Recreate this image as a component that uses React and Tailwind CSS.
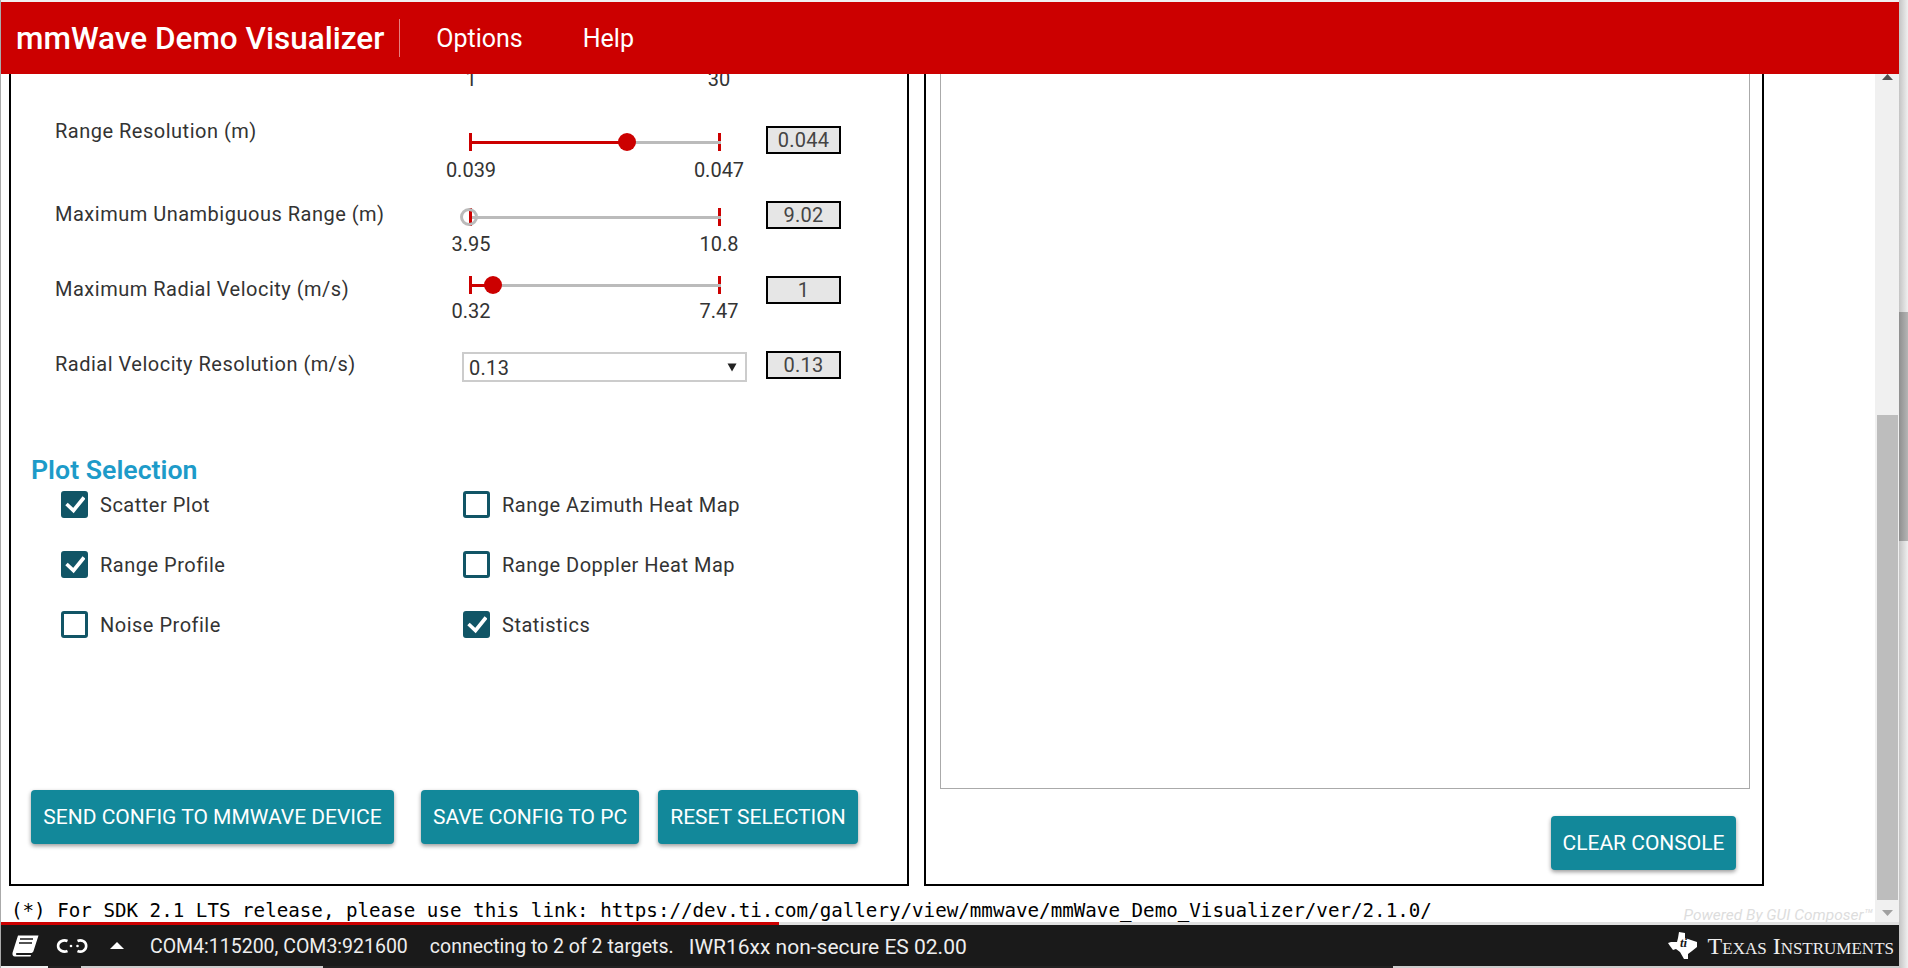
import React from 'react';

const Slider = ({ min, max, percent, fillTo = 0, hollow = false, labelsClass = 'mt-[6px]' }) => (
    <div className="w-[330px] px-[39px] shrink-0">
        <div className="relative w-[252px] h-[18px]">
            <div className="absolute right-0 top-0 w-[3px] h-[18px] bg-[#cc0000]" />
            <div className="absolute left-0 right-0 top-[8px] h-[3px] bg-[#bbbbbb]" />
            {fillTo > 0 && <div className="absolute left-0 top-[8px] h-[3px] bg-[#cc0000]" style={{ width: fillTo }} />}
            <div className="absolute left-0 top-0 w-[3px] h-[18px] bg-[#cc0000]" />
            {hollow ? (
                <div className="absolute left-[-9px] top-0 w-[18px] h-[18px] rounded-full border-[3px] border-[#bbbbbb]" />
            ) : (
                <div className="absolute top-0 w-[18px] h-[18px] rounded-full bg-[#cc0000]" style={{ left: percent }} />
            )}
        </div>
        <RangeLabels min={min} max={max} className={labelsClass} />
    </div>
);

const RangeLabels = ({ min, max, className }) => (
    <div className={`flex justify-between -mx-[39px] px-[1px] text-[20px] leading-[24px] text-[#333333] ${className}`}>
        <span className="w-[80px] text-center">{min}</span>
        <span className="w-[80px] text-center">{max}</span>
    </div>
);

const ValueBox = ({ value, className = '' }) => (
    <div className={`w-[75px] h-[28px] ml-[6px] shrink-0 border-[2.5px] border-black bg-[#e6e6e6] text-[20px] leading-[24px] tracking-[0.3px] text-[#444444] text-center ${className}`}>
        {value}
    </div>
);

const Label = ({ children, className = '' }) => (
    <div className={`w-[375px] shrink-0 text-[20px] leading-[24px] tracking-[0.5px] text-[#333333] ${className}`}>{children}</div>
);

const Check = ({ label, checked }) => (
    <div className="flex items-center h-[27px]">
        <div className={`w-[27px] h-[27px] rounded-[3px] border-[3px] border-[#115566] shrink-0 ${checked ? 'bg-[#115566]' : 'bg-white'}`}>
            {checked && (
                <svg width="21" height="21" viewBox="0 0 21 21" fill="none" stroke="white" strokeWidth="3.6">
                    <path d="M2.5 10 L9.5 16.5 L20 3.5" />
                </svg>
            )}
        </div>
        <span className="ml-[12px] text-[20px] leading-[24px] tracking-[0.5px] text-[#333333]">{label}</span>
    </div>
);

const Button = ({ children, className = '' }) => (
    <button className={`h-[54px] pt-[2px] rounded-[4px] bg-[#12889a] text-white text-[21px] shadow-[0_2px_4px_rgba(0,0,0,0.4)] ${className}`}>
        {children}
    </button>
);

const SettingsPanel = () => (
    <div className="w-[900px] h-[812px] shrink-0 border-x-2 border-b-2 border-black flex flex-col overflow-hidden">
        {/* scrolled content: the frame-rate row is cut off by the header */}
        <div className="flex pl-[419px] -mt-[7px]">
            <RangeLabels min="1" max="30" className="w-[330px] mx-0 px-[0px]" />
        </div>

        <div className="flex pl-[44px] mt-[28px] h-[82px]">
            <Label>Range Resolution (m)</Label>
            <div className="mt-[14px]"><Slider min="0.039" max="0.047" percent={149} fillTo={158} labelsClass="mt-[7px]" /></div>
            <ValueBox value="0.044" className="mt-[7px]" />
        </div>
        <div className="flex pl-[44px] h-[75px]">
            <Label className="mt-[1px]">Maximum Unambiguous Range (m)</Label>
            <div className="mt-[7px]"><Slider min="3.95" max="10.8" hollow labelsClass="mt-[6px]" /></div>
            <ValueBox value="9.02" />
        </div>
        <div className="flex pl-[44px] h-[75px]">
            <Label className="mt-[1px]">Maximum Radial Velocity (m/s)</Label>
            <Slider min="0.32" max="7.47" percent={15} fillTo={24} labelsClass="mt-[5px]" />
            <ValueBox value="1" />
        </div>
        <div className="flex pl-[44px] h-[75px]">
            <Label className="mt-[1px]">Radial Velocity Resolution (m/s)</Label>
            <div className="w-[285px] h-[30px] ml-[32px] mt-[1px] shrink-0 border-2 border-[#cccccc] flex items-center justify-between pl-[5px] pr-[8px] text-[20px] text-[#333333]">
                <span className="pt-[2px] tracking-[0.3px]">0.13</span>
                <svg width="10" height="9" viewBox="0 0 10 9"><path d="M0.5 0.5 H9.5 L5 8.5 Z" fill="#222222" /></svg>
            </div>
            <ValueBox value="0.13" className="ml-[19px]" />
        </div>

        <h2 className="mt-[28px] pl-[20px] text-[26.7px] leading-[32px] font-semibold text-[#1d9bc9]">Plot Selection</h2>
        <div className="grid grid-cols-[402px_402px] gap-y-[33px] pl-[50px] mt-[5px]">
            <Check label="Scatter Plot" checked />
            <Check label="Range Azimuth Heat Map" />
            <Check label="Range Profile" checked />
            <Check label="Range Doppler Heat Map" />
            <Check label="Noise Profile" />
            <Check label="Statistics" checked />
        </div>

        <div className="mt-auto mb-[40px] pl-[20px] flex">
            <Button className="w-[363px]">SEND CONFIG TO MMWAVE DEVICE</Button>
            <Button className="w-[218px] ml-[27px]">SAVE CONFIG TO PC</Button>
            <Button className="w-[200px] ml-[19px]">RESET SELECTION</Button>
        </div>
    </div>
);

const ConsolePanel = () => (
    <div className="w-[840px] h-[812px] ml-[15px] shrink-0 border-x-2 border-b-2 border-black pl-[14px] pr-[12px]">
        <div className="h-[715px] border-x border-b border-[#aaaaaa]" />
        <div className="flex justify-end mt-[27px] mr-[14px]">
            <Button className="w-[185px]">CLEAR CONSOLE</Button>
        </div>
    </div>
);

const Scrollbar = () => (
    <div className="w-[24px] h-[848px] shrink-0 bg-[#f0f0f0] flex flex-col items-center">
        <svg width="11" height="6" viewBox="0 0 11 6" className="shrink-0"><path d="M5.5 0 L11 6 H0 Z" fill="#505050" /></svg>
        <div className="w-[21px] h-[485px] mt-[335px] bg-[#bdbdbd]" />
        <svg width="11" height="6" viewBox="0 0 11 6" className="mt-[10px] shrink-0"><path d="M0 0 H11 L5.5 6 Z" fill="#a0a0a0" /></svg>
    </div>
);

const BookIcon = () => (
    <svg width="27" height="22" viewBox="0 0 27 22" className="shrink-0">
        <path d="M6 0.5 H26.5 L21.5 16 C21 17.5 20 18 18.5 18 H5 C3.5 18 3.5 20 5 20 H19 L18.5 21.5 H3 C0.8 21.5 0 19.5 0.6 17.5 Z" fill="white" />
        <path d="M8 4 H21 M7 8 H20" stroke="#1a1a1a" strokeWidth="1.6" />
    </svg>
);

const LinkIcon = () => (
    <svg width="33" height="14" viewBox="0 0 33 14" fill="none" stroke="white" strokeWidth="2.6" className="shrink-0">
        <path d="M12.5 2 A6.5 5.6 0 1 0 12.5 12" />
        <path d="M22.5 2 A6 5.6 0 1 1 22.5 12" />
        <circle cx="16" cy="7" r="1.3" fill="white" stroke="none" />
        <circle cx="22.5" cy="7" r="1.3" fill="white" stroke="none" />
    </svg>
);

const TiLogo = () => (
    <svg width="30" height="28" viewBox="0 0 30 28" className="shrink-0">
        <path d="M11 0 L17 1 L17 6 L23 8 L29 10 L29 15 L24 19 L20 22 L20 27 L16 27 L12 20 L8 17 L5 18 L2 14 L0 11 L3 10 L9 10 L10 6 Z" fill="white" />
        <text x="12" y="15" fontSize="13" fontWeight="700" fontStyle="italic" fontFamily="'Liberation Serif', serif" fill="#1a1a1a">ti</text>
    </svg>
);

const Footer = () => (
    <div className="h-[41px] bg-[#1a1a1a] flex items-center pl-[11px] pr-[5px] text-[#eeeeee]">
        <BookIcon />
        <div className="ml-[16px]"><LinkIcon /></div>
        <svg width="14" height="7" viewBox="0 0 14 7" className="ml-[22px] shrink-0"><path d="M7 0 L14 7 H0 Z" fill="white" /></svg>
        <div className="ml-[26px] pt-[2px] flex items-center leading-[24px] whitespace-nowrap">
            <span className="text-[19.5px]">COM4:115200, COM3:921600</span>
            <span className="ml-[22px] text-[19.5px]">connecting to 2 of 2 targets.</span>
            <span className="ml-[15px] text-[21px]">IWR16xx non-secure ES 02.00</span>
        </div>
        <div className="ml-auto flex items-center">
            <TiLogo />
            <span className="ml-[10px] font-['Liberation_Serif'] text-[24px] [font-variant:small-caps] whitespace-nowrap">Texas Instruments</span>
        </div>
    </div>
);

const App = () => (
    <div className="w-[1908px] h-[968px] flex overflow-hidden bg-white font-['Roboto',sans-serif]">
        <div className="w-[1899px] shrink-0 flex flex-col border-l border-[#aaaaaa]">
            <div className="h-[2px] bg-[#f0f0f0] shrink-0" />
            <header className="relative z-10 h-[72px] shrink-0 bg-[#cc0000] flex items-center text-white">
                <div className="pl-[15px] pr-[15px] h-[38px] pt-[2px] border-r border-[#e68080] flex items-center text-[31.5px] font-medium whitespace-nowrap">
                    mmWave Demo Visualizer
                </div>
                <span className="ml-[36px] pt-[2px] text-[25px]">Options</span>
                <span className="ml-[60px] pt-[2px] text-[25px]">Help</span>
            </header>

            <div className="flex h-[848px] shrink-0">
                <div className="w-[1874px] shrink-0 flex flex-col">
                    <div className="flex pl-[8px]">
                        <SettingsPanel />
                        <ConsolePanel />
                    </div>
                    <div className="flex justify-between items-end h-[36px] pl-[10px] pr-[2px]">
                        <span className="font-['DejaVu_Sans_Mono',monospace] text-[19.2px] leading-[22px] text-black whitespace-pre">
                            (*) For SDK 2.1 LTS release, please use this link: https://dev.ti.com/gallery/view/mmwave/mmWave_Demo_Visualizer/ver/2.1.0/
                        </span>
                        <span className="text-[15.5px] leading-[14px] italic text-[#dddddd] whitespace-nowrap">Powered By GUI Composer™</span>
                    </div>
                </div>
                <Scrollbar />
            </div>

            <div className="h-[3px] shrink-0 bg-[#e0e0e0]">
                <div className="w-[778px] h-full bg-[#cc0000]" />
            </div>
            <Footer />
            <div className="h-[2px] shrink-0 flex bg-[#cccccc]">
                <div className="w-[47px] bg-[#f0f0f0]" />
                <div className="w-[33px] bg-[#222222]" />
                <div className="w-[242px] bg-[#cccccc]" />
                <div className="w-[1070px] bg-[#222222]" />
            </div>
        </div>

        {/* sliver of the window behind */}
        <div className="flex-1 flex flex-col">
            <div className="h-[312px] bg-gradient-to-r from-[#c4c4c4] to-[#f0f0f0]" />
            <div className="h-[229px] bg-gradient-to-r from-[#8f8f8f] to-[#b5b5b5]" />
            <div className="flex-1 bg-gradient-to-r from-[#c4c4c4] to-[#f0f0f0]" />
        </div>
    </div>
);

export default App;
